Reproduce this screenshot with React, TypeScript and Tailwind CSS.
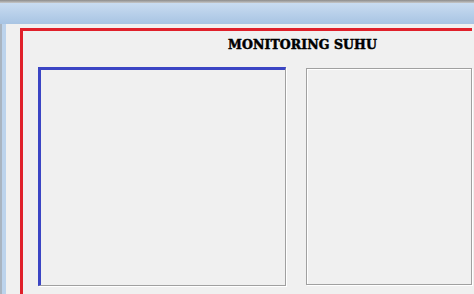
import React from "react";

function Panel({ accent }: { accent?: boolean }) {
  return (
    <div
      className={
        accent
          ? "w-[248px] h-[219px] border-l-[3px] border-t-[3px] border-l-[#3b45c4] border-t-[#3b45c4] border-r border-b border-r-[#a0a0a0] border-b-[#a0a0a0] shadow-[1px_1px_0_#ffffff]"
          : "flex-1 h-[217px] mt-[1px] border border-[#a0a0a0] shadow-[inset_1px_1px_0_#ffffff,1px_1px_0_#ffffff]"
      }
    />
  );
}

export default function App() {
  return (
    <div className="w-[474px] h-[294px] overflow-hidden bg-[#f0f0f0] flex flex-col">
      <div className="h-[3px] bg-gradient-to-b from-[#8c8c8c] to-[#c8c8c8]" />
      <div className="h-[21px] bg-gradient-to-b from-[#c9dcf1] to-[#a8c4e3]" />
      <div className="flex flex-1 min-h-0">
        <div className="w-[6px] border-l-2 border-[#a9b4c0] bg-[#bcd3ec]" />
        <div className="flex-1 pl-[14px] pt-[4px] pr-[2px]">
          <div className="h-full border-l-[3px] border-t-[3px] border-[#e0202a] flex flex-col">
            <div className="h-[36px] pl-[205px] pt-[6px]">
              <h1 className="font-['DejaVu_Serif',serif] font-bold text-[12.5px] leading-[15px] text-black tracking-[0.1px] [-webkit-text-stroke:0.5px_black]">
                MONITORING SUHU
              </h1>
            </div>
            <div className="flex gap-[20px] pl-[15px]">
              <Panel accent />
              <Panel />
            </div>
          </div>
        </div>
      </div>
    </div>
  );
}
